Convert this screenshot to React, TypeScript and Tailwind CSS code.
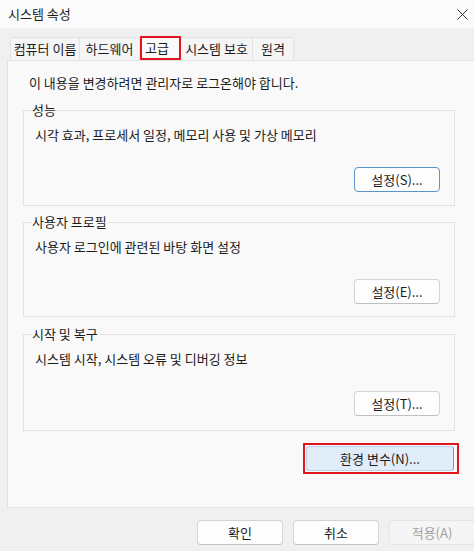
import React from 'react';

const tabs = [
  { label: '컴퓨터 이름', w: 'w-[70px]' },
  { label: '하드웨어', w: 'w-[60px]' },
  { label: '고급', w: 'w-[41px]', active: true },
  { label: '시스템 보호', w: 'w-[72px]' },
  { label: '원격', w: 'w-[41px]' },
];

const groups = [
  { title: '성능', desc: '시각 효과, 프로세서 일정, 메모리 사용 및 가상 메모리', btn: '설정(S)...', focused: true },
  { title: '사용자 프로필', desc: '사용자 로그인에 관련된 바탕 화면 설정', btn: '설정(E)...' },
  { title: '시작 및 복구', desc: '시스템 시작, 시스템 오류 및 디버깅 정보', btn: '설정(T)...' },
];

function Btn({ children, focused, disabled, className = '' }: { children: React.ReactNode; focused?: boolean; disabled?: boolean; className?: string }) {
  return (
    <button
      className={`h-[25px] rounded-[4px] border text-[13px] leading-[18px] ${
        disabled
          ? 'bg-[#f5f5f5] border-[#e5e5e5] text-[#a0a0a0]'
          : focused
          ? 'bg-[#fdfdfd] border-[#5f93cc] text-[#1b1b1b]'
          : 'bg-[#fdfdfd] border-[#d3d3d3] border-b-[#c0c0c0] text-[#1b1b1b]'
      } ${className}`}
    >
      {children}
    </button>
  );
}

export default function App() {
  return (
    <div className="w-[474px] h-[551px] overflow-hidden bg-[#f0f0f0] text-[#1b1b1b] font-['Noto_Sans_CJK_KR',sans-serif] text-[13px] leading-[18px]">
      {/* Title bar */}
      <div className="h-[28px] bg-[#fbfbfb] flex items-center justify-between pl-[8px] pr-[5px]">
        <span>시스템 속성</span>
        <svg width="11" height="11" viewBox="0 0 11 11" className="mr-[1px]">
          <path d="M0.5 0.5L10.5 10.5M10.5 0.5L0.5 10.5" stroke="#333" strokeWidth="1" />
        </svg>
      </div>

      {/* Tabs */}
      <div className="mt-[8px] pl-[10px] flex items-end h-[24px]">
        {tabs.map((t) =>
          t.active ? (
            <div
              key={t.label}
              className={`${t.w} h-[24px] bg-[#f9f9f9] border-2 border-[#e2141c] flex items-center pl-[3px]`}
            >
              {t.label}
            </div>
          ) : (
            <div
              key={t.label}
              className={`${t.w} h-[23px] bg-[#f5f5f5] border-t border-r border-[#e2e2e2] first:border-l flex items-center justify-center`}
            >
              {t.label}
            </div>
          )
        )}
      </div>

      {/* Panel */}
      <div className="ml-[7px] w-[472px] h-[448px] bg-[#f9f9f9] border border-[#e3e3e3] pl-[15px]">
        <p className="mt-[13px] ml-[6px]">이 내용을 변경하려면 관리자로 로그온해야 합니다.</p>

        {groups.map((g, i) => (
          <fieldset
            key={g.title}
            className={`w-[432px] border border-[#e2e2e2] px-[11px] ${i === 0 ? 'mt-[9px] pb-[13px]' : i === 1 ? 'mt-[7px] pb-[12px]' : 'mt-[8px] pb-[14px]'}`}
          >
            <legend className="ml-[-4px] px-[1px]">{g.title}</legend>
            <p className="mt-[7px]">{g.desc}</p>
            <div className="flex justify-end mt-[23px] pr-[3px]">
              <Btn focused={g.focused} className="w-[86px]">{g.btn}</Btn>
            </div>
          </fieldset>
        ))}

        <div className="ml-[280px] mt-[12px] w-[156px] h-[31px] border-2 border-[#e2141c] pl-[1px] pt-[1px]">
          <button className="w-[148px] h-[25px] rounded-[3px] bg-[#e0ecf8] border border-[#b9d1ea] border-r-[#6f9ccc] text-[13px] leading-[18px]">
            환경 변수(N)...
          </button>
        </div>
      </div>

      {/* Bottom buttons */}
      <div className="flex gap-[10px] pl-[197px] mt-[12px]">
        <Btn className="w-[86px] shrink-0">확인</Btn>
        <Btn className="w-[86px] shrink-0">취소</Btn>
        <Btn disabled className="w-[86px] shrink-0">적용(A)</Btn>
      </div>
    </div>
  );
}
